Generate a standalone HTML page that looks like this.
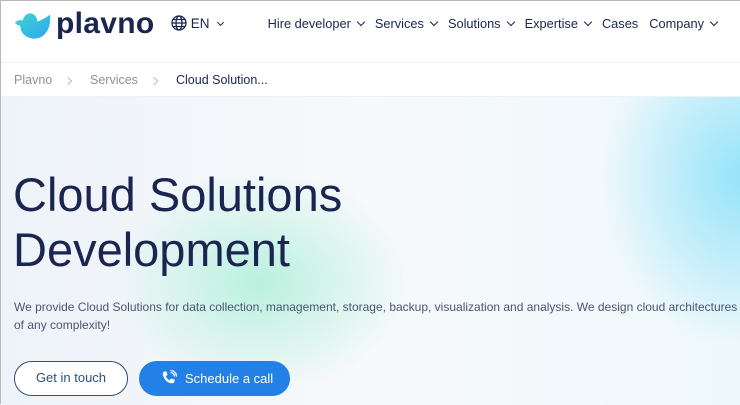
<!DOCTYPE html>
<html><head><meta charset="utf-8"><style>
*{margin:0;padding:0;box-sizing:border-box}
body{width:740px;height:404px;overflow:hidden;font-family:"Liberation Sans",sans-serif;background:#fff;position:relative;border:1px solid #b8b8b8}
.hdr{position:absolute;left:0;top:0;width:740px;height:62px;background:#fff;border-bottom:1px solid #eceff3}
.logo{position:absolute;left:55px;top:6px;font-size:30px;font-weight:bold;color:#1a2550;letter-spacing:0.3px}
.lang{position:absolute;left:170px;top:14px;font-size:13.5px;color:#1a2550}
.nav{position:absolute;right:24px;top:15px;font-size:12.8px;color:#1a2550;display:flex;gap:11px}
.nav span::after{content:"";display:inline-block;width:5px;height:5px;border-right:1.5px solid #1a2550;border-bottom:1.5px solid #1a2550;transform:rotate(45deg);margin:0 0 3px 7px}
.nav span.nc::after{display:none}
.bc{position:absolute;left:0;top:62px;width:740px;height:34px;background:#fff;font-size:12.5px;color:#8a92a0;border-bottom:1px solid #eef1f5}
.bc span{position:absolute;top:10px}
.chev{position:absolute;top:15px;width:6px;height:6px;border-right:1px solid #b5bcc6;border-top:1px solid #b5bcc6;transform:rotate(45deg)}
.hero{position:absolute;left:0;top:96px;width:740px;height:308px;background:
radial-gradient(ellipse 150px 110px at 260px 185px,rgba(160,238,210,.7),rgba(160,238,210,0) 100%),
radial-gradient(ellipse 140px 170px at 740px 80px,rgba(140,225,250,.9),rgba(140,225,250,0) 100%),
linear-gradient(90deg,#eef3f9,#f7f9fb 50%,#eef8fb)}
h1{position:absolute;left:12px;top:70px;font-weight:normal;font-size:47px;line-height:55px;color:#1a2550}
p{position:absolute;left:13px;top:201px;width:725px;font-size:12px;line-height:18px;color:#4a5670}
.b1{position:absolute;left:13px;top:264px;width:114px;height:35px;border:1.5px solid #2d4f7a;border-radius:18px;font-size:13px;color:#2d4f7a;text-align:center;line-height:32px;background:#fff}
.b2{position:absolute;left:138px;top:264px;width:151px;height:35px;border-radius:18px;background:#2380e6;color:#fff;font-size:13px;line-height:35px;padding-left:46px}
</style></head><body>
<div class="hdr">
<svg style="position:absolute;left:12px;top:8px" width="40" height="32" viewBox="0 0 34 28"><defs><linearGradient id="g" x1="0" y1="0" x2="1" y2="1"><stop offset="0" stop-color="#3fd6d0"/><stop offset="1" stop-color="#2ea6f0"/></linearGradient></defs><path d="M1 12 Q4 9 8 10 Q10 3 16 4 Q20 5 21 11 Q26 9 32 5 Q33 18 25 24 Q18 28 11 24 Q6 21 6 15 Q3 14 1 12Z" fill="url(#g)"/></svg>
<div class="logo">plavno</div>
<div class="lang"><svg width="16" height="16" viewBox="0 0 16 16" style="vertical-align:-3px"><g fill="none" stroke="#1a2550" stroke-width="1.3"><circle cx="8" cy="8" r="7"/><ellipse cx="8" cy="8" rx="3" ry="7"/><path d="M1 8h14M2 4.5h12M2 11.5h12"/></g></svg> EN <span style="display:inline-block;width:5px;height:5px;border-right:1.5px solid #1a2550;border-bottom:1.5px solid #1a2550;transform:rotate(45deg);margin:0 0 3px 5px"></span></div>
<div class="nav"><span>Hire developer</span><span>Services</span><span>Solutions</span><span>Expertise</span><span class="nc">Cases</span><span>Company</span></div>
</div>
<div class="bc"><span style="left:13px">Plavno</span><i class="chev" style="left:64px"></i><span style="left:89px">Services</span><i class="chev" style="left:150px"></i><span style="left:175px;color:#1a2550">Cloud Solution...</span></div>
<div class="hero">
<h1>Cloud Solutions<br>Development</h1>
<p>We provide Cloud Solutions for data collection, management, storage, backup, visualization and analysis. We design cloud architectures of any complexity!</p>
<div class="b1">Get in touch</div>
<div class="b2"><svg style="position:absolute;left:22px;top:9px" width="16" height="16" viewBox="0 0 16 16"><path d="M3 1.5l2.5 0 1 3.5-1.8 1.2q1.3 2.8 4.1 4.1l1.2-1.8 3.5 1v2.5q-1 1.5-3 1.3Q4 12.5 1.7 4.5 1.5 2.5 3 1.5Z" fill="#fff"/><path d="M9.5 2.5a4 4 0 0 1 4 4M9.5 0.5a6 6 0 0 1 6 6" stroke="#fff" stroke-width="1.3" fill="none"/></svg>Schedule a call</div>
</div>
</body></html>
